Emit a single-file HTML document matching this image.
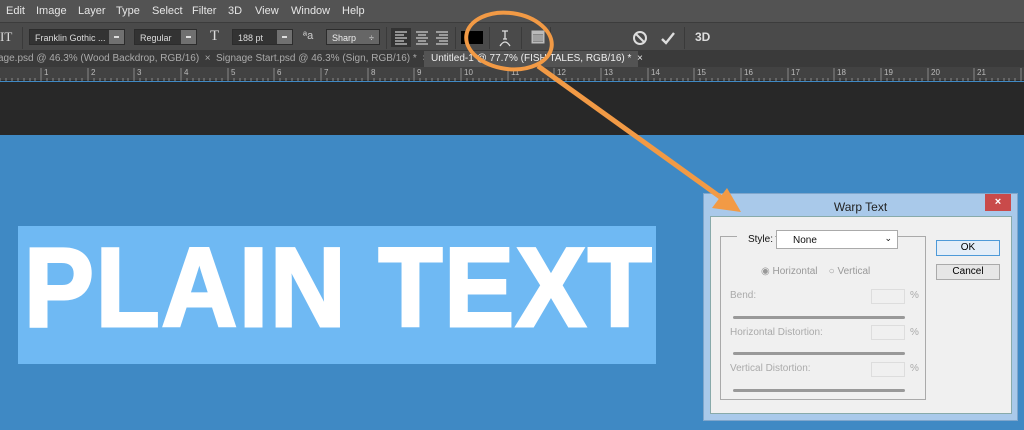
<!DOCTYPE html>
<html><head><style>
*{margin:0;padding:0;box-sizing:border-box}
body{width:1024px;height:430px;overflow:hidden;position:relative;background:#3f89c4;font-family:"Liberation Sans",sans-serif}
.a{position:absolute}
.menu{top:0;left:0;width:1024px;height:22px;background:#535353;color:#e6e6e6;font-size:11px}
.menu span{position:absolute;top:5px}
.tb{top:22px;left:0;width:1024px;height:29px;background:#4a4a4a;border-top:1px solid #3c3c3c;border-bottom:1px solid #3a3a3a}
.dd{position:absolute;top:6px;height:16px;background:#333;color:#ddd;font-size:9px;padding:3px 5px;border:1px solid #2c2c2c}
.dd b{position:absolute;right:0;top:0;width:15px;height:14px;background:#707070;}
.dd b:after{content:"";position:absolute;left:5px;top:6px;width:5px;height:2px;background:#ddd}
.tabs{top:51px;left:0;width:1024px;height:16px;background:#3a3a3a;color:#aaa;font-size:10px}
.tabs span{position:absolute;top:2px}
.ruler{top:67px;left:0;width:1024px;height:14px;background:#424242;border-bottom:1px solid #2a2a2a;color:#bbb;font-size:8px}
.sep{position:absolute;top:4px;width:1px;height:22px;background:#3a3a3a}
</style></head><body>
<div class="a menu">
<span style="left:6px">Edit</span><span style="left:36px">Image</span><span style="left:78px">Layer</span><span style="left:116px">Type</span><span style="left:152px">Select</span><span style="left:192px">Filter</span><span style="left:228px">3D</span><span style="left:255px">View</span><span style="left:291px">Window</span><span style="left:342px">Help</span>
</div>
<div class="a tb">
<span style="position:absolute;left:0;top:6px;color:#ddd;font:13px 'Liberation Serif',serif">IT</span>
<div class="sep" style="left:22px"></div>
<div class="dd" style="left:29px;width:96px">Franklin Gothic ...<b></b></div>
<div class="dd" style="left:134px;width:63px">Regular<b></b></div>
<span style="position:absolute;left:210px;top:5px;color:#ddd;font:15px 'Liberation Serif',serif">T</span>
<div class="dd" style="left:232px;width:61px">188 pt<b></b></div>
<span style="position:absolute;left:303px;top:7px;color:#ccc;font-size:11px">ªa</span>
<div class="dd" style="left:326px;width:54px;background:#666;color:#eee">Sharp<span style="position:absolute;right:5px">÷</span></div>
<div class="sep" style="left:386px"></div>
<div style="position:absolute;left:391px;top:5px;width:20px;height:19px;background:#333"></div>
<svg style="position:absolute;left:393px;top:8px" width="60" height="14" stroke="#ccc" stroke-width="1.3"><path d="M2 1h12M2 4h9M2 7h12M2 10h9M2 13h12M23 1h12M25 4h8M23 7h12M25 10h8M23 13h12M43 1h12M46 4h9M43 7h12M46 10h9M43 13h12"/></svg>
<div class="sep" style="left:455px"></div>
<div style="position:absolute;left:461px;top:8px;width:22px;height:13px;background:#000"></div>
<div class="sep" style="left:489px"></div>
<svg style="position:absolute;left:497px;top:6px" width="16" height="18" stroke="#ddd" stroke-width="1.3" fill="none"><path d="M5 2h6M8 2v8M6 10h4M3 17q5-8 10 0"/></svg>
<div class="sep" style="left:521px"></div>
<svg style="position:absolute;left:531px;top:7px" width="15" height="15"><rect x="0.5" y="0.5" width="13" height="13" fill="#bbb"/><rect x="2" y="4" width="10" height="8" fill="#888"/><path d="M2 6h10M2 8h10M2 10h10" stroke="#bbb"/></svg>
<div class="sep" style="left:550px"></div>
<svg style="position:absolute;left:632px;top:7px" width="16" height="16" stroke="#ddd" stroke-width="2" fill="none"><circle cx="8" cy="8" r="6"/><path d="M4 4l8 8"/></svg>
<svg style="position:absolute;left:660px;top:7px" width="16" height="16" stroke="#ddd" stroke-width="2.4" fill="none"><path d="M2 9l4 4 8-10"/></svg>
<div class="sep" style="left:684px"></div>
<span style="position:absolute;left:695px;top:7px;color:#ddd;font-size:12px;font-weight:bold">3D</span>
</div>
<div class="a tabs">
<span style="left:-2px">age.psd @ 46.3% (Wood Backdrop, RGB/16) &nbsp;×</span>
<span style="left:216px">Signage Start.psd @ 46.3% (Sign, RGB/16) * &nbsp;×</span>
<div style="position:absolute;left:424px;top:0;width:214px;height:16px;background:#535353"></div>
<span style="left:431px;color:#eee">Untitled-1 @ 77.7% (FISH TALES, RGB/16) * &nbsp;×</span>
</div>
<div class="a ruler">
<svg width="1024" height="14" style="position:absolute;left:0;top:0">
<g stroke="#888">
<path d="M41 1v13M88 1v13M134 1v13M181 1v13M228 1v13M274 1v13M321 1v13M368 1v13M414 1v13M461 1v13M508 1v13M554 1v13M601 1v13M648 1v13M694 1v13M741 1v13M788 1v13M834 1v13M881 1v13M928 1v13M974 1v13M1021 1v13"/>
<path d="M0 11v3M6 11v3M12 11v3M18 11v3M24 11v3M30 11v3M35 11v3M47 11v3M53 11v3M59 11v3M64 11v3M70 11v3M76 11v3M82 11v3M94 11v3M100 11v3M105 11v3M111 11v3M117 11v3M123 11v3M128 11v3M140 11v3M146 11v3M152 11v3M158 11v3M164 11v3M169 11v3M175 11v3M187 11v3M193 11v3M199 11v3M204 11v3M210 11v3M216 11v3M222 11v3M234 11v3M240 11v3M245 11v3M251 11v3M257 11v3M263 11v3M268 11v3M280 11v3M286 11v3M292 11v3M298 11v3M303 11v3M309 11v3M315 11v3M327 11v3M333 11v3M338 11v3M344 11v3M350 11v3M356 11v3M362 11v3M374 11v3M380 11v3M385 11v3M391 11v3M397 11v3M403 11v3M409 11v3M420 11v3M426 11v3M432 11v3M438 11v3M444 11v3M449 11v3M455 11v3M467 11v3M473 11v3M479 11v3M484 11v3M490 11v3M496 11v3M502 11v3M514 11v3M520 11v3M525 11v3M531 11v3M537 11v3M543 11v3M548 11v3M560 11v3M566 11v3M572 11v3M578 11v3M584 11v3M589 11v3M595 11v3M607 11v3M613 11v3M619 11v3M624 11v3M630 11v3M636 11v3M642 11v3M654 11v3M660 11v3M665 11v3M671 11v3M677 11v3M683 11v3M688 11v3M700 11v3M706 11v3M712 11v3M718 11v3M724 11v3M729 11v3M735 11v3M747 11v3M753 11v3M759 11v3M764 11v3M770 11v3M776 11v3M782 11v3M794 11v3M800 11v3M805 11v3M811 11v3M817 11v3M823 11v3M828 11v3M840 11v3M846 11v3M852 11v3M858 11v3M864 11v3M869 11v3M875 11v3M887 11v3M893 11v3M899 11v3M904 11v3M910 11v3M916 11v3M922 11v3M934 11v3M940 11v3M945 11v3M951 11v3M957 11v3M963 11v3M968 11v3M980 11v3M986 11v3M992 11v3M998 11v3M1004 11v3M1009 11v3M1015 11v3"/>
</g>
<g fill="#bbb" font-size="8" font-family="Liberation Sans">
<text x="44" y="8">1</text><text x="91" y="8">2</text><text x="137" y="8">3</text><text x="184" y="8">4</text><text x="231" y="8">5</text><text x="277" y="8">6</text><text x="324" y="8">7</text><text x="371" y="8">8</text><text x="417" y="8">9</text><text x="464" y="8">10</text><text x="511" y="8">11</text><text x="557" y="8">12</text><text x="604" y="8">13</text><text x="651" y="8">14</text><text x="697" y="8">15</text><text x="744" y="8">16</text><text x="791" y="8">17</text><text x="837" y="8">18</text><text x="884" y="8">19</text><text x="931" y="8">20</text><text x="977" y="8">21</text>
</g></svg>
</div>
<div class="a" style="top:82px;left:0;width:1024px;height:53px;background:#282828"></div>
<div class="a" style="left:18px;top:226px;width:638px;height:138px;background:#6fb9f3"></div>
<div class="a" style="left:24px;top:228px;color:#fff;font-weight:bold;font-size:112px;line-height:120px;letter-spacing:2px;-webkit-text-stroke:3px #fff;transform:scaleX(0.935);transform-origin:0 0;white-space:nowrap">PLAIN TEXT</div>
<!-- dialog -->
<div class="a" style="left:703px;top:193px;width:315px;height:228px;background:#a9c9ea;border:1px solid #7fa6cc">
<div style="position:absolute;left:0;top:6px;width:313px;text-align:center;font-size:12px;color:#222">Warp Text</div>
<div style="position:absolute;right:6px;top:0;width:26px;height:17px;background:#c94a4a;color:#fff;font-size:11px;text-align:center;line-height:17px;font-weight:bold">×</div>
<div style="position:absolute;left:6px;top:22px;width:302px;height:198px;background:#f0f0f0;border:1px solid #8aa">
<div style="position:absolute;left:9px;top:19px;width:206px;height:164px;border:1px solid #aaa"></div>
<div style="position:absolute;left:26px;top:13px;width:38px;height:18px;background:#f0f0f0;font-size:10px;color:#111;padding-top:4px;text-align:right;padding-right:2px">Style:</div>
<div style="position:absolute;left:65px;top:13px;width:122px;height:19px;background:#fff;border:1px solid #aaa;font-size:10px;padding:4px 0 0 16px;color:#111">None<span style="position:absolute;right:5px;top:2px;font-size:9px">⌄</span></div>
<div style="position:absolute;left:225px;top:23px;width:64px;height:16px;border:1px solid #4e9ad8;background:#e4eef8;font-size:10px;text-align:center;line-height:14px">OK</div>
<div style="position:absolute;left:225px;top:47px;width:64px;height:16px;border:1px solid #aaa;background:#e6e6e6;font-size:10px;text-align:center;line-height:14px">Cancel</div>
<div style="position:absolute;left:50px;top:49px;font-size:10px;color:#999">◉ Horizontal &nbsp;&nbsp; ○ Vertical</div>
<div style="position:absolute;left:19px;top:73px;font-size:10px;color:#aaa">Bend:</div>
<div style="position:absolute;left:19px;top:110px;font-size:10px;color:#aaa">Horizontal Distortion:</div>
<div style="position:absolute;left:19px;top:146px;font-size:10px;color:#aaa">Vertical Distortion:</div>
<div style="position:absolute;left:160px;top:72px;width:34px;height:15px;border:1px solid #ddd"></div>
<div style="position:absolute;left:160px;top:108px;width:34px;height:15px;border:1px solid #ddd"></div>
<div style="position:absolute;left:160px;top:145px;width:34px;height:15px;border:1px solid #ddd"></div>
<div style="position:absolute;left:199px;top:73px;font-size:10px;color:#aaa">%</div>
<div style="position:absolute;left:199px;top:110px;font-size:10px;color:#aaa">%</div>
<div style="position:absolute;left:199px;top:146px;font-size:10px;color:#aaa">%</div>
<div style="position:absolute;left:22px;top:99px;width:172px;height:3px;background:#999;border-radius:2px"></div>
<div style="position:absolute;left:22px;top:135px;width:172px;height:3px;background:#999;border-radius:2px"></div>
<div style="position:absolute;left:22px;top:172px;width:172px;height:3px;background:#999;border-radius:2px"></div>
</div>
</div>
<svg class="a" style="left:0;top:0" width="1024" height="430" fill="none">
<ellipse cx="509" cy="41" rx="43" ry="28" transform="rotate(8 509 41)" stroke="#f29a45" stroke-width="4"/>
<path d="M538 66L730 204" stroke="#f29a45" stroke-width="5"/>
<path d="M741 212L727 188L712 208Z" fill="#f29a45"/>
</svg>
</body></html>
